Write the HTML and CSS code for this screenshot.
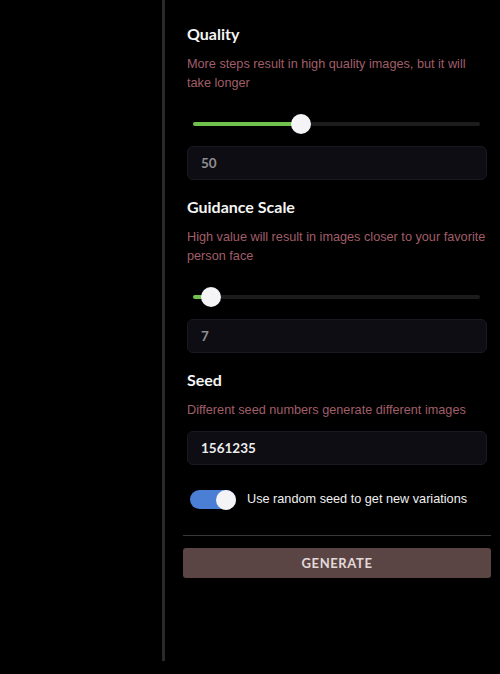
FILE: index.html
```html
<!DOCTYPE html>
<html lang="en">
<head>
<meta charset="utf-8">
<title>Settings</title>
<link rel="stylesheet" href="styles.css">
</head>
<body>
<div class="layout">
  <div class="sidebar"></div>
  <div class="rule"></div>
  <main class="panel">
    <section class="field">
      <h2 class="title">Quality</h2>
      <p class="desc">More steps result in high quality images, but it will take longer</p>
      <div class="slider">
        <div class="track">
          <div class="fill" style="width:108px"></div>
          <div class="thumb" style="left:98px"></div>
        </div>
      </div>
      <input class="box box-dim" type="text" value="50">
    </section>
    <section class="field">
      <h2 class="title">Guidance Scale</h2>
      <p class="desc">High value will result in images closer to your favorite person face</p>
      <div class="slider">
        <div class="track">
          <div class="fill" style="width:18px"></div>
          <div class="thumb" style="left:8px"></div>
        </div>
      </div>
      <input class="box box-dim" type="text" value="7">
    </section>
    <section class="field">
      <h2 class="title">Seed</h2>
      <p class="desc desc-one">Different seed numbers generate different images</p>
      <input class="box box-bright" type="text" value="1561235">
      <label class="toggle-row">
        <span class="toggle"><span class="knob"></span></span>
        <span class="toggle-label">Use random seed to get new variations</span>
      </label>
    </section>
    <hr class="divider">
    <button class="generate" type="button">GENERATE</button>
  </main>
</div>
</body>
</html>
```
FILE: styles.css
```css
html, body {
  margin: 0;
  padding: 0;
  background: #000;
}
body {
  font-family: "Liberation Sans", Arial, sans-serif;
  color: #f2f2f2;
}
.layout {
  display: flex;
  align-items: flex-start;
}
.sidebar {
  width: 162px;
  flex: 0 0 162px;
}
.rule {
  width: 3px;
  flex: 0 0 3px;
  height: 661px;
  background: #2a2a2a;
}
.panel {
  width: 308px;
  padding: 24px 0 0 18px;
}
.field {
  padding: 0 4px;
  margin-bottom: 17px;
}
.field:last-of-type {
  margin-bottom: 0;
}
.title {
  margin: 0;
  font-family: Lato, "Noto Sans", sans-serif;
  font-weight: 700;
  font-size: 16px;
  line-height: 20px;
  color: #f5f5f5;
}
.desc {
  margin: 11px 0 0;
  font-size: 12.7px;
  line-height: 19px;
  color: #a05e69;
}
.desc-one {
  margin-bottom: 11px;
}
.slider {
  height: 20px;
  margin-top: 21px;
  display: flex;
  align-items: center;
  padding: 0 7px 0 6px;
}
.track {
  position: relative;
  flex: 1;
  height: 4px;
  border-radius: 2px;
  background: #1c1c1d;
}
.fill {
  height: 4px;
  border-radius: 2px;
  background: #6fc24c;
}
.thumb {
  position: absolute;
  top: -8px;
  width: 20px;
  height: 20px;
  border-radius: 50%;
  background: #f4f4f6;
}
.box {
  display: block;
  box-sizing: border-box;
  width: 300px;
  height: 34px;
  margin: 12px 0 0;
  padding: 0 13px;
  border: 1px solid #1a1920;
  border-radius: 6px;
  background: #0e0d13;
  font-family: Lato, "Noto Sans", sans-serif;
  font-weight: 700;
  font-size: 13.5px;
  outline: none;
}
.desc-one + .box {
  margin-top: 0;
}
.box-dim {
  color: #8e8e93;
}
.box-bright {
  color: #ececee;
}
.toggle-row {
  display: flex;
  align-items: center;
  height: 20px;
  margin-top: 24px;
  padding-left: 3px;
}
.toggle {
  position: relative;
  width: 46px;
  height: 19px;
  border-radius: 10px;
  background: #4b7fd5;
  flex: 0 0 46px;
}
.knob {
  position: absolute;
  right: 0;
  top: 0;
  width: 20px;
  height: 20px;
  border-radius: 50%;
  background: #f4f4f6;
}
.toggle-label {
  margin-left: 11px;
  font-size: 12.7px;
  line-height: 19px;
  color: #f0f0f0;
}
.divider {
  margin: 26px 0 0;
  border: 0;
  height: 1px;
  background: #38383a;
}
.generate {
  display: block;
  width: 308px;
  height: 30px;
  margin-top: 12px;
  padding: 0;
  border: 0;
  border-radius: 3px;
  background: #5a4544;
  color: #e4d9d9;
  font-family: Lato, "Noto Sans", sans-serif;
  font-size: 13px;
  font-weight: 700;
  letter-spacing: 0.6px;
}
```
